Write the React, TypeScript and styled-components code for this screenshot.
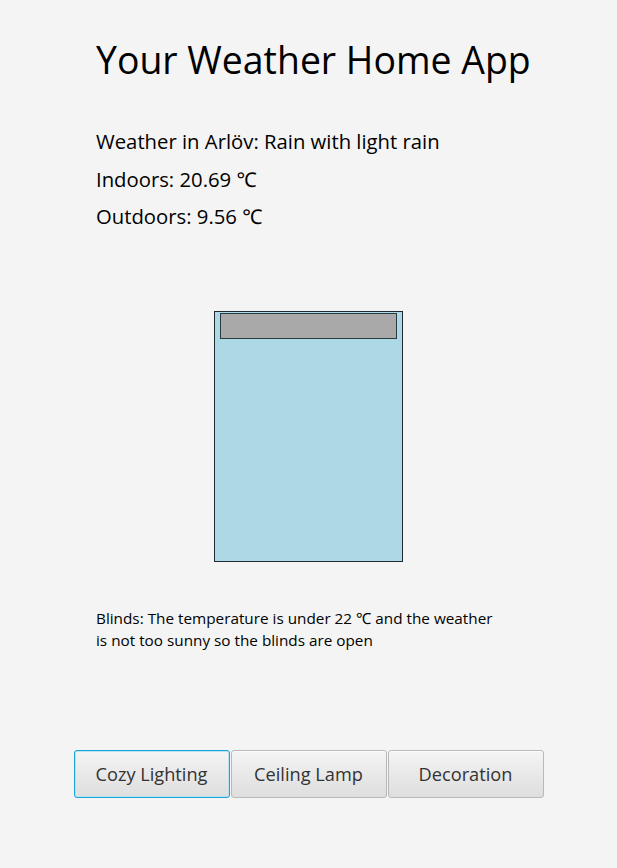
import styled, { createGlobalStyle } from 'styled-components';

const GlobalStyle = createGlobalStyle`
  html, body {
    margin: 0;
    padding: 0;
    background: #f4f4f4;
  }
  body {
    font-family: "Open Sans", "Noto Sans", sans-serif;
    color: #000;
  }
`;

const Page = styled.div`
  width: 617px;
  height: 868px;
  display: flex;
  flex-direction: column;
  box-sizing: border-box;
  padding-top: 35px;
`;

const Info = styled.section`
  padding-left: 96px;
  display: flex;
  flex-direction: column;
`;

const Title = styled.h1`
  margin: 0 0 38px;
  font-size: 37.4px;
  font-weight: 400;
  line-height: 50px;
`;

const InfoLine = styled.p`
  margin: 0;
  font-size: 20.3px;
  line-height: 37.5px;
`;

const BlindsArea = styled.div`
  display: flex;
  justify-content: center;
  margin-top: 75px;
`;

const Window = styled.div`
  width: 189px;
  height: 251px;
  box-sizing: border-box;
  border: 1px solid #1d2b30;
  background: #add8e6;
  padding: 1px 5px 0;
`;

const Blind = styled.div<{ $height: number }>`
  height: ${p => p.$height}px;
  box-sizing: border-box;
  background: #a9a9a9;
  border: 1.5px solid #2a3a40;
`;

const Status = styled.p`
  margin: 45px 0 0 96px;
  width: 410px;
  font-size: 15.3px;
  line-height: 22px;
`;

const ButtonBar = styled.div`
  display: flex;
  justify-content: center;
  gap: 1px;
  margin-top: 99px;
`;

const ToggleButton = styled.button<{ $focused?: boolean }>`
  width: 156px;
  height: 48px;
  box-sizing: border-box;
  font-family: "Open Sans", "Noto Sans", sans-serif;
  font-size: 18.2px;
  color: #333;
  border-radius: 3px;
  border: 1px solid ${p => (p.$focused ? '#1aa3d6' : '#b9b9b9')};
  background: linear-gradient(#f4f4f4, #dedede);
  box-shadow: ${p => (p.$focused ? 'inset 0 0 0 1px #b9e2f2' : 'inset 0 1px 0 #fbfbfb')};
  cursor: pointer;
  padding: 0;
`;

export default function App() {
  return (
    <>
      <GlobalStyle />
      <Page>
        <Info>
          <Title>Your Weather Home App</Title>
          <InfoLine>Weather in Arlöv: Rain with light rain</InfoLine>
          <InfoLine>Indoors: 20.69 ℃</InfoLine>
          <InfoLine>Outdoors: 9.56 ℃</InfoLine>
        </Info>
        <BlindsArea>
          <Window>
            <Blind $height={26} />
          </Window>
        </BlindsArea>
        <Status>
          Blinds: The temperature is under 22 ℃ and the weather is not too sunny so the blinds are open
        </Status>
        <ButtonBar>
          <ToggleButton $focused>Cozy Lighting</ToggleButton>
          <ToggleButton>Ceiling Lamp</ToggleButton>
          <ToggleButton>Decoration</ToggleButton>
        </ButtonBar>
      </Page>
    </>
  );
}
